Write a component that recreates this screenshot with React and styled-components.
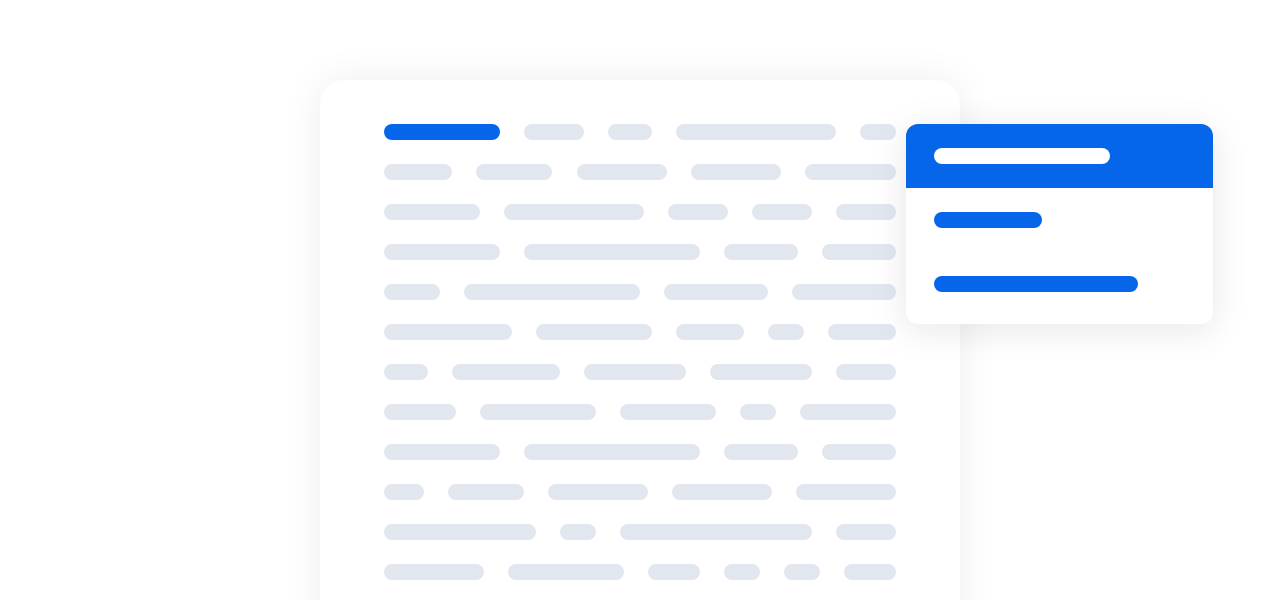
import React from "react";
import styled, { createGlobalStyle } from "styled-components";

const GlobalStyle = createGlobalStyle`
  html, body {
    margin: 0;
    padding: 0;
    background: #ffffff;
    font-family: "Inter", "Liberation Sans", sans-serif;
    overflow: hidden;
  }
`;

const Page = styled.div`
  width: 1280px;
  height: 600px;
  padding-top: 80px;
  padding-left: 320px;
  box-sizing: border-box;
  overflow: hidden;
`;

const DocumentCard = styled.div`
  position: relative;
  width: 640px;
  height: 620px;
  box-sizing: border-box;
  padding: 44px 64px;
  background: #ffffff;
  border-radius: 24px;
  box-shadow: 0 0 40px rgba(15, 23, 42, 0.07);

  display: flex;
  flex-direction: column;
  gap: 24px;
`;

const Row = styled.div`
  display: flex;
  justify-content: space-between;
  gap: 24px;
`;

const Bar = styled.div`
  height: 16px;
  width: ${(props) => props.w}px;
  flex-shrink: 0;
  border-radius: 8px;
  background: ${(props) => props.color || "#e2e7ef"};
`;

const Popover = styled.div`
  position: absolute;
  left: 586px;
  top: 44px;
  width: 307px;
  border-radius: 12px;
  overflow: hidden;
  background: #ffffff;
  box-shadow: 0 6px 36px rgba(15, 23, 42, 0.1);
`;

const PopoverHeader = styled.div`
  height: 64px;
  box-sizing: border-box;
  padding: 24px 28px;
  background: #0566ea;
`;

const PopoverBody = styled.div`
  display: flex;
  flex-direction: column;
  gap: 48px;
  padding: 24px 28px 32px;
`;

const BLUE = "#0566ea";

const rows = [
  [116, 60, 44, 160, 36],
  [68, 76, 90, 90, 91],
  [96, 140, 60, 60, 60],
  [116, 176, 74, 74],
  [56, 176, 104, 104],
  [128, 116, 68, 36, 68],
  [44, 108, 102, 102, 60],
  [72, 116, 96, 36, 96],
  [116, 176, 74, 74],
  [40, 76, 100, 100, 100],
  [152, 36, 192, 60],
  [100, 116, 52, 36, 36, 52],
];

const App = () => {
  return (
    <>
      <GlobalStyle />
      <Page>
        <DocumentCard>
          {rows.map((row, i) => (
            <Row key={i}>
              {row.map((w, j) => (
                <Bar key={j} w={w} color={i === 0 && j === 0 ? BLUE : null} />
              ))}
            </Row>
          ))}
          <Popover>
            <PopoverHeader>
              <Bar w={176} color="#ffffff" />
            </PopoverHeader>
            <PopoverBody>
              <Bar w={108} color={BLUE} />
              <Bar w={204} color={BLUE} />
            </PopoverBody>
          </Popover>
        </DocumentCard>
      </Page>
    </>
  );
};

export default App;
